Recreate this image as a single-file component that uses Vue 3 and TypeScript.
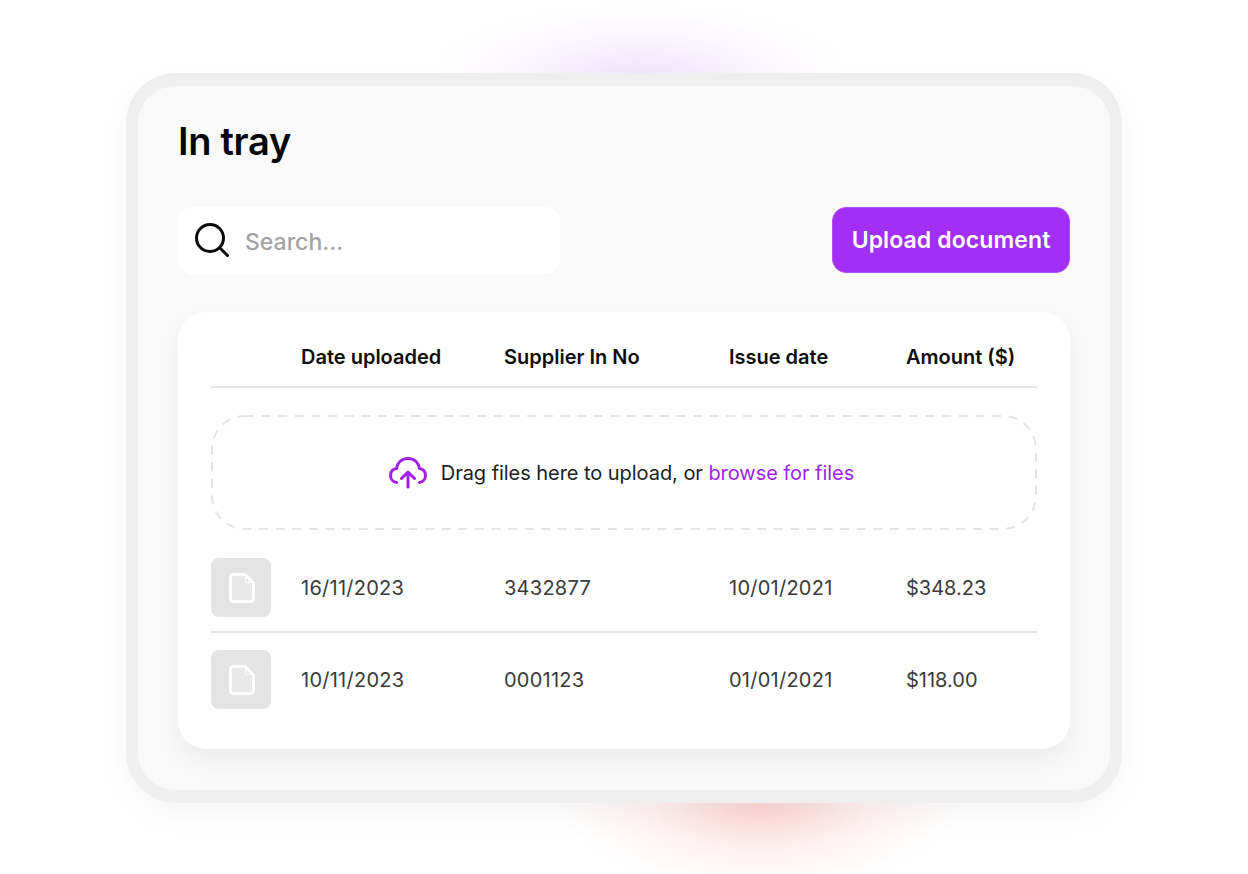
<script setup lang="ts">
interface Doc {
  uploaded: string
  supplierNo: string
  issued: string
  amount: string
}

const docs: Doc[] = [
  { uploaded: '16/11/2023', supplierNo: '3432877', issued: '10/01/2021', amount: '$348.23' },
  { uploaded: '10/11/2023', supplierNo: '0001123', issued: '01/01/2021', amount: '$118.00' },
]
</script>

<template>
  <div class="stage">
    <div class="glow purple"></div>
    <div class="glow red"></div>
    <div class="frame">
      <h1 class="title">In tray</h1>
      <div class="toolbar">
        <div class="search">
          <svg class="search-icon" viewBox="0 0 36 36" fill="none" stroke="#0a0a0a" stroke-width="3" stroke-linecap="round">
            <circle cx="16" cy="15" r="13.5" />
            <path d="M26.5 25.5l7 7" />
          </svg>
          <span class="placeholder">Search...</span>
        </div>
        <button class="upload">Upload document</button>
      </div>
      <div class="card">
        <div class="row head">
          <span></span>
          <span>Date uploaded</span>
          <span>Supplier In No</span>
          <span>Issue date</span>
          <span>Amount ($)</span>
        </div>
        <div class="drop">
          <svg class="dashes" viewBox="0 0 826 115" fill="none">
            <rect x="1" y="1" width="824" height="113" rx="33" stroke="#e4e4e4" stroke-width="2" stroke-dasharray="9 7.6" />
          </svg>
          <svg class="cloud" viewBox="0 0 38 32" fill="none" stroke="#a21fe8" stroke-width="3" stroke-linecap="round" stroke-linejoin="round">
            <path d="M7.6 25.6C4 25 1.5 22 1.5 18.5 1.5 14.5 4 12 7.5 11.5 8.5 5.5 13 1.5 19 1.5c6 0 10.5 4 11.5 10 3.5.5 6 3 6 7 0 3.5-2.5 6.5-6 7.1" />
            <path d="M19 30V15M12.5 21.5 19 15l6.5 6.5" />
          </svg>
          <span>Drag files here to upload, or <span class="browse">browse for files</span></span>
        </div>
        <div v-for="d in docs" :key="d.supplierNo" class="row doc">
          <div class="thumb">
            <svg viewBox="0 0 26 30" fill="none" stroke="#fff" stroke-width="3" stroke-linejoin="round">
              <path d="M4 1.500h12l8.500 8.500v16a2.500 2.500 0 0 1-2.500 2.500H4A2.500 2.500 0 0 1 1.500 26V4A2.500 2.500 0 0 1 4 1.500z" fill="#e9e9e9" />
              <path d="M16.500 4v4.500a1 1 0 0 0 1 1h4" stroke-width="1" />
            </svg>
          </div>
          <span>{{ d.uploaded }}</span>
          <span>{{ d.supplierNo }}</span>
          <span>{{ d.issued }}</span>
          <span class="amount">{{ d.amount }}</span>
        </div>
      </div>
    </div>
  </div>
</template>

<style>
html,
body {
  margin: 0;
  background: #fff;
}
</style>

<style scoped>
.stage {
  position: relative;
  width: 1248px;
  height: 874px;
  overflow: hidden;
  padding: 73px 0 0 126px;
  box-sizing: border-box;
  font-family: Inter, 'Liberation Sans', sans-serif;
}
.glow {
  position: absolute;
  border-radius: 50%;
}
.purple {
  left: 430px;
  top: 4px;
  width: 420px;
  height: 140px;
  background: radial-gradient(closest-side, rgba(160, 80, 220, 0.15), rgba(160, 80, 220, 0.05) 55%, rgba(160, 80, 220, 0));
}
.red {
  left: 560px;
  top: 720px;
  width: 400px;
  height: 170px;
  background: radial-gradient(closest-side, rgba(240, 70, 70, 0.24), rgba(240, 90, 90, 0.08) 55%, rgba(240, 90, 90, 0));
}
.frame {
  position: relative;
  width: 996px;
  height: 730px;
  box-sizing: border-box;
  padding: 28px 40px 0;
  background: #f9f9f9;
  border: solid #efefef;
  border-width: 13px 12px;
  border-radius: 50px;
  box-shadow: 0 12px 30px rgba(0, 0, 0, 0.04);
}
.title {
  margin: 0;
  font-size: 38px;
  line-height: 54px;
  font-weight: 600;
  letter-spacing: -0.3px;
  color: #050505;
}
.toolbar {
  display: flex;
  justify-content: space-between;
  margin-top: 39px;
}
.search {
  display: flex;
  align-items: center;
  gap: 15px;
  width: 382px;
  height: 67px;
  padding-left: 16px;
  box-sizing: border-box;
  background: #fff;
  border-radius: 14px;
}
.search-icon {
  width: 36px;
  height: 36px;
}
.placeholder {
  padding-top: 2px;
  font-size: 23px;
  font-weight: 500;
  color: #a3a3a3;
}
.upload {
  width: 238px;
  height: 66px;
  border: 1px solid #b150f0;
  border-radius: 14px;
  background: #a22ff5;
  color: #fff;
  font-family: inherit;
  font-size: 23px;
  font-weight: 600;
  letter-spacing: 0.1px;
  padding: 0;
}
.card {
  margin-top: 38px;
  height: 437px;
  box-sizing: border-box;
  padding: 0 33px;
  background: #fff;
  border-radius: 28px;
  box-shadow: 0 12px 26px rgba(0, 0, 0, 0.05);
}
.row {
  display: grid;
  grid-template-columns: 90px 203px 225px 177px 1fr;
  align-items: center;
}
.head {
  height: 76px;
  padding-top: 15px;
  box-sizing: border-box;
  border-bottom: 2px solid #e4e4e4;
  font-size: 20px;
  font-weight: 575;
  color: #0d0d0d;
}
.drop {
  position: relative;
  display: flex;
  align-items: center;
  justify-content: center;
  gap: 14px;
  height: 115px;
  margin: 27px 0 14px;
  padding-right: 5px;
  box-sizing: border-box;
  font-size: 20px;
  letter-spacing: -0.05px;
  color: #1c1c1c;
}
.dashes {
  position: absolute;
  inset: 0;
  width: 100%;
  height: 100%;
}
.cloud {
  width: 38px;
  height: 32px;
}
.browse {
  color: #a21fe8;
}
.doc {
  padding: 14px 0;
  font-size: 20px;
  letter-spacing: 0.25px;
  color: #3a3a3a;
}
.doc + .doc {
  border-top: 2px solid #e4e4e4;
  padding-top: 17px;
}
.amount {
  letter-spacing: 0;
}
.thumb {
  display: flex;
  align-items: center;
  justify-content: center;
  width: 60px;
  height: 59px;
  padding-left: 2px;
  box-sizing: border-box;
  background: #e4e4e4;
  border-radius: 8px;
}
.thumb svg {
  width: 26px;
  height: 30px;
}
</style>
